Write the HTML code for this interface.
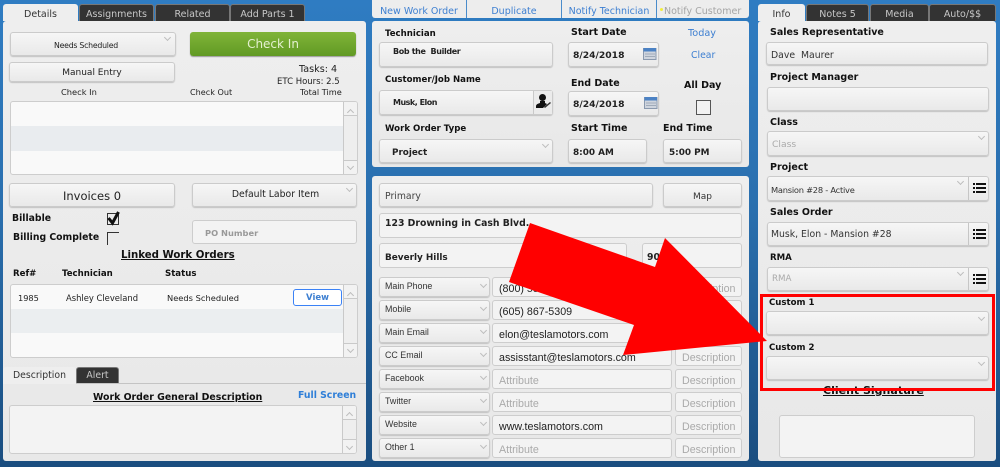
<!DOCTYPE html>
<html><head><meta charset="utf-8"><style>
html,body{margin:0;padding:0}
body{width:1000px;height:467px;position:relative;overflow:hidden;background:linear-gradient(180deg,#2f7cc2 0,#2a6fae 45%,#1a4d7f 100%);font-family:"DejaVu Sans",sans-serif;color:#222;font-size:9px}
div,span.t{position:absolute;box-sizing:border-box}
.p{background:linear-gradient(#eeeeee,#e8e8e8);border-radius:3px}
.b{background:linear-gradient(#f6f6f6,#e9e9e9);border:1px solid #cbcbcb;border-radius:3px;box-shadow:0 1px 1px #c2c2c2}
.i{background:#f3f3f3;border:1px solid #cdcdcd;border-radius:3px}
.t{white-space:nowrap;line-height:12px;height:12px;margin-top:3px}
.n{margin-top:0}
.h{font-weight:bold;font-size:9.5px;color:#111}
.s{font-size:8.6px}
.c{text-align:center}
.tab{background:#333;color:#c8c8c8;border:1px solid #777;border-bottom:0;border-radius:3px 3px 0 0;text-align:center;font-size:9.5px;line-height:19px;height:17px;top:4px}
.tab.on{background:#eeeeee;color:#333;border:0;line-height:21px}
.ch{width:5px;height:5px;border-right:1px solid #bdbdbd;border-bottom:1px solid #bdbdbd;transform:rotate(45deg)}
.sb{background:#eeeeee;border-left:1px solid #c9c9c9}
.sq{left:0;right:0;height:14px;background:#f2f2f2}
.bl{color:#3d7fd1}
.row{height:20px}
.a{font-family:"Liberation Sans",sans-serif;font-size:10.7px;line-height:22px;padding-left:6px;white-space:nowrap}
.g{color:#aaa}
.sl{font-family:"Liberation Sans",sans-serif;font-size:8.9px;line-height:16px;padding-left:5px;color:#333;white-space:nowrap}
.u{text-decoration:underline;font-weight:bold;color:#111;font-size:10.2px}
.ln{width:13px;height:2px;background:linear-gradient(90deg,#111 2px,transparent 2px,transparent 3px,#111 3px)}
</style></head><body>

<!-- LEFT -->
<div class="p" style="left:3px;top:21px;width:363px;height:440px"></div>
<div class="tab on" style="left:3px;width:75px">Details</div>
<div class="tab" style="left:79px;width:75px">Assignments</div>
<div class="tab" style="left:155px;width:75px">Related</div>
<div class="tab" style="left:230px;width:75px">Add Parts 1</div>

<div class="b" style="left:10px;top:32px;width:166px;height:24px"></div>
<span class="t c" style="left:10px;top:37px;width:152px;font-size:7.8px;letter-spacing:-.25px">Needs Scheduled</span>
<div class="ch" style="left:165px;top:35px"></div>
<div style="left:190px;top:32px;width:166px;height:24px;border-radius:3px;background:linear-gradient(#80b438,#619a24);box-shadow:0 1px 1px #999"></div>
<span class="t c n" style="left:190px;top:38px;width:166px;font-size:12px;color:#e4f0d0">Check In</span>
<div class="b" style="left:9px;top:62px;width:166px;height:20px"></div>
<span class="t c" style="left:9px;top:64px;width:166px;font-size:9px">Manual Entry</span>
<span class="t" style="left:299px;top:61px;font-size:9.600px">Tasks: 4</span>
<span class="t" style="left:277px;top:73px;font-size:8.500px">ETC Hours: 2.5</span>
<span class="t n" style="left:61px;top:86px;font-size:8.3px">Check In</span>
<span class="t n" style="left:190px;top:86px;font-size:8.1px">Check Out</span>
<span class="t n" style="left:300px;top:86px;font-size:8.2px">Total Time</span>

<div class="i" style="left:10px;top:101px;width:348px;height:74px;background:#f9f9f9;overflow:hidden">
 <div style="left:0;top:24px;width:333px;height:25px;background:#e9ecef"></div>
 <div class="sb" style="right:0;top:0;width:14px;height:72px"><div class="sq" style="top:0;border-bottom:1px solid #c9c9c9"></div><div class="sq" style="bottom:0;border-top:1px solid #c9c9c9"></div></div>
</div>
<div class="ch" style="left:348px;top:110px;transform:rotate(225deg)"></div>
<div class="ch" style="left:348px;top:164px"></div>

<div class="b" style="left:9px;top:183px;width:166px;height:24px"></div>
<span class="t c n" style="left:9px;top:190px;width:166px;font-size:11.5px">Invoices 0</span>
<div class="b" style="left:192px;top:183px;width:165px;height:24px"></div>
<span class="t c" style="left:192px;top:186px;width:167px;font-size:9.300px">Default Labor Item</span>
<div class="ch" style="left:347px;top:186px"></div>
<span class="t h" style="left:12px;top:210px;font-size:9.300px">Billable</span>
<div style="left:107px;top:213px;width:12px;height:12px;border:1px solid #333"></div>
<svg style="position:absolute;left:106px;top:210px" width="15" height="16"><path d="M2.5 8 L6.5 13 L12.5 2" fill="none" stroke="#111" stroke-width="3"/></svg>
<span class="t h n" style="left:13px;top:232px;font-size:9.300px">Billing Complete</span>
<div style="left:107px;top:232px;width:12px;height:13px;border-left:1px solid #333;border-top:1px solid #333"></div>
<div class="i" style="left:192px;top:220px;width:165px;height:24px"></div>
<span class="t n" style="left:205px;top:227px;font-size:8.3px;font-weight:bold;color:#999">PO Number</span>

<span class="t u n" style="left:121px;top:250px">Linked Work Orders</span>
<span class="t h s" style="left:13px;top:265px">Ref#</span>
<span class="t h s" style="left:62px;top:265px">Technician</span>
<span class="t h s" style="left:165px;top:265px">Status</span>
<div class="i" style="left:10px;top:284px;width:348px;height:74px;background:#f9f9f9;overflow:hidden">
 <div style="left:0;top:24px;width:333px;height:24px;background:#ebeef0"></div>
 <div class="sb" style="right:0;top:0;width:14px;height:72px"><div class="sq" style="top:0;border-bottom:1px solid #c9c9c9"></div><div class="sq" style="bottom:0;border-top:1px solid #c9c9c9"></div></div>
</div>
<div class="ch" style="left:348px;top:293px;transform:rotate(225deg)"></div>
<div class="ch" style="left:348px;top:347px"></div>
<span class="t n" style="left:18px;top:292px;font-size:8.2px">1985</span>
<span class="t n" style="left:66px;top:292px;font-size:8.4px">Ashley Cleveland</span>
<span class="t n" style="left:167px;top:292px;font-size:8.3px">Needs Scheduled</span>
<div style="left:293px;top:289px;width:49px;height:17px;border:1px solid #3b82f6;border-radius:3px;background:#fff"></div>
<span class="t c bl n" style="left:293px;top:292px;width:49px;font-size:8.5px;font-weight:bold">View</span>

<div style="left:3px;top:383px;width:363px;height:1px;background:#c4c4c4"></div>
<div class="tab on" style="left:3px;top:367px;width:73px;height:17px;font-size:9.3px;line-height:18px">Description</div>
<div class="tab" style="left:76px;top:367px;width:43px;height:16px;font-size:9.3px;line-height:16px">Alert</div>
<span class="t u" style="left:93px;top:389px;font-size:9.400px">Work Order General Description</span>
<span class="t bl" style="left:298px;top:387px;font-size:9.300px;font-weight:bold;color:#2f7fd8">Full Screen</span>
<div class="i" style="left:9px;top:405px;width:348px;height:49px;overflow:hidden">
 <div class="sb" style="right:0;top:0;width:14px;height:47px"><div class="sq" style="top:0;border-bottom:1px solid #c9c9c9"></div><div class="sq" style="bottom:0;border-top:1px solid #c9c9c9"></div></div>
</div>
<div class="ch" style="left:347px;top:413px;transform:rotate(225deg)"></div>
<div class="ch" style="left:347px;top:444px"></div>

<!-- MIDDLE -->
<div style="left:372px;top:0;width:377px;height:18px;background:#ededed;border-radius:0 0 3px 3px"></div>
<div style="left:466px;top:0;width:1px;height:18px;background:#4a8ccb"></div>
<div style="left:561px;top:0;width:1px;height:18px;background:#4a8ccb"></div>
<div style="left:656px;top:0;width:1px;height:18px;background:#4a8ccb"></div>
<span class="t c bl" style="left:372px;top:3px;width:94px;font-size:9.5px">New Work Order</span>
<span class="t c bl" style="left:467px;top:3px;width:94px;font-size:9.5px">Duplicate</span>
<span class="t c bl" style="left:562px;top:3px;width:94px;font-size:9.5px">Notify Technician</span>
<div style="left:660px;top:8px;width:3px;height:3px;background:#f2ee3a;border-radius:50%"></div>
<span class="t" style="left:664px;top:3px;font-size:9.5px;color:#a5a5a5">Notify Customer</span>

<div class="p" style="left:372px;top:21px;width:377px;height:146px"></div>
<span class="t h s" style="left:385px;top:25px">Technician</span>
<div class="b" style="left:379px;top:42px;width:174px;height:25px"></div>
<span class="t" style="left:393px;top:43px;font-size:8px;font-weight:bold;letter-spacing:-.35px">Bob the&nbsp; Builder</span>
<span class="t h" style="left:571px;top:24px">Start Date</span>
<div class="b" style="left:568px;top:42px;width:91px;height:25px"></div>
<span class="t" style="left:573px;top:47px;font-size:9.200px;font-weight:bold">8/24/2018</span>
<svg style="position:absolute;left:643px;top:47px" width="14" height="13"><rect x="0.5" y="1.5" width="12.5" height="11" fill="#cfd5de" stroke="#8a99ae"/><rect x="0.5" y="1" width="12.5" height="3.500" fill="#4c82c4"/><path d="M2 7h10M2 9.500h10" stroke="#a0abb9"/></svg>
<span class="t bl" style="left:688px;top:25px;font-size:9.700px">Today</span>
<span class="t bl" style="left:691px;top:47px;font-size:9.300px">Clear</span>

<span class="t h s" style="left:385px;top:71px">Customer/Job Name</span>
<div class="b" style="left:379px;top:90px;width:174px;height:25px"></div>
<div style="left:533px;top:91px;width:19px;height:23px;border-left:1px solid #c9c9c9;background:#ebebeb"></div>
<svg style="position:absolute;left:535px;top:93px" width="17" height="18"><circle cx="7.500" cy="4.500" r="3.500" fill="#111"/><path d="M5 8h5v2l2 1-4 4H1v-2q0-2 4-3z" fill="#111"/><path d="M9 14l6-5 1 1-6 5z" fill="#333"/></svg>
<span class="t" style="left:393px;top:94px;font-size:8px;font-weight:bold;letter-spacing:-.5px">Musk, Elon</span>
<span class="t h" style="left:571px;top:75px">End Date</span>
<div class="b" style="left:568px;top:91px;width:91px;height:25px"></div>
<span class="t" style="left:573px;top:96px;font-size:9.200px;font-weight:bold">8/24/2018</span>
<svg style="position:absolute;left:644px;top:96px" width="14" height="13"><rect x="0.5" y="1.5" width="12.5" height="11" fill="#cfd5de" stroke="#8a99ae"/><rect x="0.5" y="1" width="12.5" height="3.500" fill="#4c82c4"/><path d="M2 7h10M2 9.500h10" stroke="#a0abb9"/></svg>
<span class="t h" style="left:684px;top:77px">All Day</span>
<div style="left:696px;top:100px;width:15px;height:15px;border:1px solid #555;background:#f2f2f2"></div>

<span class="t h s" style="left:385px;top:120px">Work Order Type</span>
<div class="b" style="left:379px;top:139px;width:174px;height:24px"></div>
<span class="t" style="left:392px;top:144px;font-size:8.800px;font-weight:bold">Project</span>
<div class="ch" style="left:543px;top:142px"></div>
<span class="t h" style="left:571px;top:120px">Start Time</span>
<div class="b" style="left:568px;top:139px;width:79px;height:24px"></div>
<span class="t" style="left:573px;top:144px;font-size:8.900px;font-weight:bold">8:00 AM</span>
<span class="t h" style="left:663px;top:120px">End Time</span>
<div class="b" style="left:663px;top:139px;width:79px;height:24px"></div>
<span class="t" style="left:669px;top:144px;font-size:8.900px;font-weight:bold">5:00 PM</span>

<div class="p" style="left:372px;top:176px;width:377px;height:285px"></div>
<div class="b" style="left:379px;top:183px;width:274px;height:24px"></div>
<span class="t" style="left:385px;top:188px;font-size:9.300px;color:#444">Primary</span>
<div class="b" style="left:663px;top:183px;width:79px;height:24px"></div>
<span class="t c" style="left:663px;top:188px;width:79px;font-size:9px;color:#333">Map</span>
<div class="i" style="left:379px;top:213px;width:363px;height:25px"></div>
<span class="t" style="left:385px;top:215px;font-size:9.300px;font-weight:bold">123 Drowning in Cash Blvd.</span>
<div class="i" style="left:379px;top:243px;width:248px;height:25px"></div>
<span class="t" style="left:385px;top:249px;font-size:8.900px;font-weight:bold">Beverly Hills</span>
<div class="i" style="left:642px;top:243px;width:100px;height:25px"></div>
<span class="t" style="left:647px;top:249px;font-size:9.300px;font-weight:bold">90210</span>

<div class="b row sl" style="left:379px;top:277px;width:111px">Main Phone</div><div class="ch" style="left:481px;top:282px"></div>
<div class="i row a" style="left:492px;top:277px;width:180px">(800) 555-1212</div>
<div class="i row a g" style="left:675px;top:277px;width:67px">Description</div>

<div class="b row sl" style="left:379px;top:300px;width:111px">Mobile</div><div class="ch" style="left:481px;top:305px"></div>
<div class="i row a" style="left:492px;top:300px;width:180px">(605) 867-5309</div>
<div class="i row a g" style="left:675px;top:300px;width:67px">Description</div>

<div class="b row sl" style="left:379px;top:323px;width:111px">Main Email</div><div class="ch" style="left:481px;top:328px"></div>
<div class="i row a" style="left:492px;top:323px;width:180px">elon@teslamotors.com</div>
<div class="i row a g" style="left:675px;top:323px;width:67px">Description</div>

<div class="b row sl" style="left:379px;top:346px;width:111px">CC Email</div><div class="ch" style="left:481px;top:351px"></div>
<div class="i row a" style="left:492px;top:346px;width:180px">assisstant@teslamotors.com</div>
<div class="i row a g" style="left:675px;top:346px;width:67px">Description</div>

<div class="b row sl" style="left:379px;top:369px;width:111px">Facebook</div><div class="ch" style="left:481px;top:374px"></div>
<div class="i row a g" style="left:492px;top:369px;width:180px">Attribute</div>
<div class="i row a g" style="left:675px;top:369px;width:67px">Description</div>

<div class="b row sl" style="left:379px;top:392px;width:111px">Twitter</div><div class="ch" style="left:481px;top:397px"></div>
<div class="i row a g" style="left:492px;top:392px;width:180px">Attribute</div>
<div class="i row a g" style="left:675px;top:392px;width:67px">Description</div>

<div class="b row sl" style="left:379px;top:415px;width:111px">Website</div><div class="ch" style="left:481px;top:420px"></div>
<div class="i row a" style="left:492px;top:415px;width:180px">www.teslamotors.com</div>
<div class="i row a g" style="left:675px;top:415px;width:67px">Description</div>

<div class="b row sl" style="left:379px;top:438px;width:111px">Other 1</div><div class="ch" style="left:481px;top:443px"></div>
<div class="i row a g" style="left:492px;top:438px;width:180px">Attribute</div>
<div class="i row a g" style="left:675px;top:438px;width:67px">Description</div>

<!-- RIGHT -->
<div class="p" style="left:758px;top:21px;width:238px;height:440px"></div>
<div class="tab on" style="left:758px;width:47px">Info</div>
<div class="tab" style="left:806px;width:63px">Notes 5</div>
<div class="tab" style="left:870px;width:59px">Media</div>
<div class="tab" style="left:929px;width:67px">Auto/$$</div>

<span class="t h" style="left:770px;top:24px">Sales Representative</span>
<div class="b" style="left:766px;top:42px;width:222px;height:23px"></div>
<span class="t" style="left:771px;top:47px;font-size:9.300px;color:#333">Dave&nbsp; Maurer</span>
<span class="t h" style="left:770px;top:69px">Project Manager</span>
<div class="b" style="left:767px;top:87px;width:222px;height:24px"></div>
<span class="t h" style="left:770px;top:114px">Class</span>
<div class="b" style="left:767px;top:131px;width:222px;height:25px"></div>
<span class="t g" style="left:772px;top:136px;font-size:9.200px">Class</span>
<div class="ch" style="left:979px;top:134px"></div>
<span class="t h" style="left:770px;top:159px">Project</span>
<div class="b" style="left:767px;top:176px;width:222px;height:25px"></div>
<div style="left:968px;top:177px;width:1px;height:23px;background:#c6c6c6"></div>
<span class="t" style="left:771px;top:181px;font-size:8.300px;letter-spacing:-.25px;color:#333">Mansion #28 - Active</span>
<div class="ch" style="left:958px;top:179px"></div>
<div class="ln" style="left:973px;top:183px"></div><div class="ln" style="left:973px;top:187px"></div><div class="ln" style="left:973px;top:191px"></div>
<span class="t h" style="left:770px;top:204px">Sales Order</span>
<div class="b" style="left:767px;top:222px;width:222px;height:24px"></div>
<div style="left:968px;top:223px;width:1px;height:22px;background:#c6c6c6"></div>
<span class="t" style="left:771px;top:226px;font-size:9.300px;color:#333">Musk, Elon - Mansion #28</span>
<div class="ln" style="left:973px;top:229px"></div><div class="ln" style="left:973px;top:233px"></div><div class="ln" style="left:973px;top:237px"></div>
<span class="t h s" style="left:770px;top:249px">RMA</span>
<div class="b" style="left:767px;top:267px;width:222px;height:24px"></div>
<div style="left:968px;top:268px;width:1px;height:22px;background:#c6c6c6"></div>
<span class="t g n" style="left:772px;top:273px;font-size:8.700px">RMA</span>
<div class="ch" style="left:958px;top:270px"></div>
<div class="ln" style="left:973px;top:274px"></div><div class="ln" style="left:973px;top:278px"></div><div class="ln" style="left:973px;top:282px"></div>
<span class="t h s" style="left:769px;top:294px">Custom 1</span>
<div class="b" style="left:766px;top:311px;width:223px;height:24px"></div>
<div class="ch" style="left:979px;top:315px"></div>
<span class="t h s" style="left:769px;top:339px">Custom 2</span>
<div class="b" style="left:766px;top:356px;width:223px;height:24px"></div>
<div class="ch" style="left:979px;top:360px"></div>
<span class="t u n" style="left:823px;top:385px;font-size:11px">Client Signature</span>
<div class="i" style="left:779px;top:415px;width:196px;height:43px"></div>

<!-- Red box & arrow -->
<div style="left:760px;top:294px;width:235px;height:97px;border:3px solid #f00"></div>
<svg style="position:absolute;left:0;top:0" width="1000" height="467"><polygon points="530,223 655,267 665,238 767,341 623,355 634,325 509,282" fill="#f00"/></svg>
</body></html>
